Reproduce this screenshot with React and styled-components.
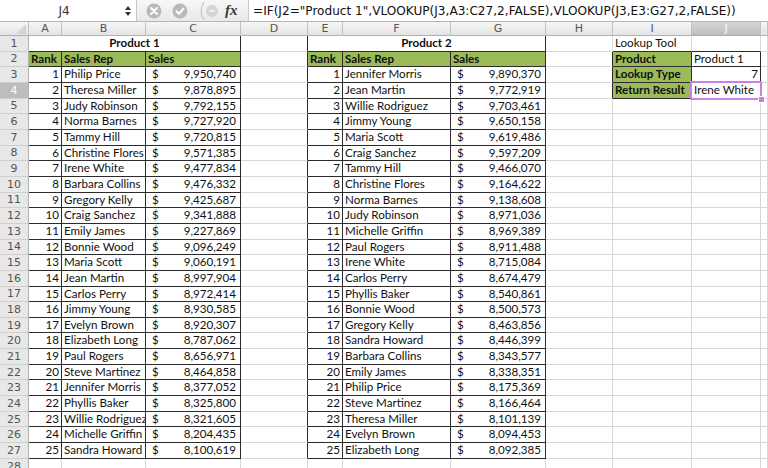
import styled, { createGlobalStyle } from "styled-components";

const GlobalStyle = createGlobalStyle`
    html, body {
        margin: 0;
        padding: 0;
        background: #fff;
        overflow: hidden;
    }
    body {
        width: 768px;
        height: 468px;
    }
`;

const product1 = [
    ["Philip Price", "9,950,740"],
    ["Theresa Miller", "9,878,895"],
    ["Judy Robinson", "9,792,155"],
    ["Norma Barnes", "9,727,920"],
    ["Tammy Hill", "9,720,815"],
    ["Christine Flores", "9,571,385"],
    ["Irene White", "9,477,834"],
    ["Barbara Collins", "9,476,332"],
    ["Gregory Kelly", "9,425,687"],
    ["Craig Sanchez", "9,341,888"],
    ["Emily James", "9,227,869"],
    ["Bonnie Wood", "9,096,249"],
    ["Maria Scott", "9,060,191"],
    ["Jean Martin", "8,997,904"],
    ["Carlos Perry", "8,972,414"],
    ["Jimmy Young", "8,930,585"],
    ["Evelyn Brown", "8,920,307"],
    ["Elizabeth Long", "8,787,062"],
    ["Paul Rogers", "8,656,971"],
    ["Steve Martinez", "8,464,858"],
    ["Jennifer Morris", "8,377,052"],
    ["Phyllis Baker", "8,325,800"],
    ["Willie Rodriguez", "8,321,605"],
    ["Michelle Griffin", "8,204,435"],
    ["Sandra Howard", "8,100,619"],
];

const product2 = [
    ["Jennifer Morris", "9,890,370"],
    ["Jean Martin", "9,772,919"],
    ["Willie Rodriguez", "9,703,461"],
    ["Jimmy Young", "9,650,158"],
    ["Maria Scott", "9,619,486"],
    ["Craig Sanchez", "9,597,209"],
    ["Tammy Hill", "9,466,070"],
    ["Christine Flores", "9,164,622"],
    ["Norma Barnes", "9,138,608"],
    ["Judy Robinson", "8,971,036"],
    ["Michelle Griffin", "8,969,389"],
    ["Paul Rogers", "8,911,488"],
    ["Irene White", "8,715,084"],
    ["Carlos Perry", "8,674,479"],
    ["Phyllis Baker", "8,540,861"],
    ["Bonnie Wood", "8,500,573"],
    ["Gregory Kelly", "8,463,856"],
    ["Sandra Howard", "8,446,399"],
    ["Barbara Collins", "8,343,577"],
    ["Emily James", "8,338,351"],
    ["Philip Price", "8,175,369"],
    ["Steve Martinez", "8,166,464"],
    ["Theresa Miller", "8,101,139"],
    ["Evelyn Brown", "8,094,453"],
    ["Elizabeth Long", "8,092,385"],
];

const columns = ["A", "B", "C", "D", "E", "F", "G", "H", "I", "J", ""];
const DARK = "#2b2b2b";
const GRID = "#d8d8d8";
const GREEN = "#9bbb59";

function Stepper() {
    return (
        <svg width="8" height="12" viewBox="0 0 8 12">
            <path d="M4 1 L7 5 H1 Z" fill="#333" />
            <path d="M4 11 L7 7 H1 Z" fill="#333" />
        </svg>
    );
}

function CancelIcon() {
    return (
        <svg width="16" height="16" viewBox="0 0 16 16">
            <circle cx="8" cy="8" r="7.5" fill="#b9b9b9" />
            <path d="M5 5 L11 11 M11 5 L5 11" stroke="#fff" strokeWidth="2" strokeLinecap="round" />
        </svg>
    );
}

function EnterIcon() {
    return (
        <svg width="16" height="16" viewBox="0 0 16 16">
            <circle cx="8" cy="8" r="7.5" fill="#b9b9b9" />
            <path d="M4.5 8.3 L7 10.8 L11.5 5.5" stroke="#fff" strokeWidth="2" fill="none" strokeLinecap="round" strokeLinejoin="round" />
        </svg>
    );
}

function FunctionIcon() {
    return (
        <svg width="26" height="20" viewBox="0 0 26 20">
            <path d="M6 1 Q0 10 6 19" stroke="#c4c4c4" strokeWidth="1.2" fill="none" />
            <circle cx="14" cy="10" r="6" fill="#d4d4d4" />
            <path d="M11.5 10 H16.5" stroke="#fff" strokeWidth="1.5" />
        </svg>
    );
}

export default function App() {
    const rows = [];

    // row 1
    rows.push(
        <Row key={1} n={1}>
            <Cell $span={3} $center $bold $right $bottom>Product 1</Cell>
            <Cell $right />
            <Cell $span={3} $center $bold $right $bottom>Product 2</Cell>
            <Cell />
            <Cell $bottom>Lookup Tool</Cell>
            <Cell $bottom />
            <Cell />
        </Row>
    );

    // row 2
    rows.push(
        <Row key={2} n={2}>
            <Cell $green $bold $right $bottom>Rank</Cell>
            <Cell $green $bold $right $bottom>Sales Rep</Cell>
            <Cell $green $bold $right $bottom>Sales</Cell>
            <Cell $right />
            <Cell $green $bold $right $bottom>Rank</Cell>
            <Cell $green $bold $right $bottom>Sales Rep</Cell>
            <Cell $green $bold $right $bottom>Sales</Cell>
            <Cell $right />
            <Cell $green $bold $right $bottom>Product</Cell>
            <Cell $right $bottom>Product 1</Cell>
            <Cell />
        </Row>
    );

    for (let i = 0; i < 25; i++) {
        const n = i + 3;
        const [name1, sales1] = product1[i];
        const [name2, sales2] = product2[i];
        let lookup = [<Cell key="i" />, <Cell key="j" />];
        if (n === 3) {
            lookup = [
                <Cell key="i" $green $bold $right $bottom>Lookup Type</Cell>,
                <Cell key="j" $alignRight $right $bottom>7</Cell>,
            ];
        }
        if (n === 4) {
            lookup = [
                <Cell key="i" $green $bold $right $bottom>Return Result</Cell>,
                <Cell key="j" $right $bottom $selected>
                    Irene White
                    <Selection />
                </Cell>,
            ];
        }
        rows.push(
            <Row key={n} n={n} selected={n === 4}>
                <Cell $alignRight $right $bottom>{i + 1}</Cell>
                <Cell $right $bottom>{name1}</Cell>
                <Cell $right $bottom>
                    <Money>
                        <span>$</span>
                        <span>{sales1}</span>
                    </Money>
                </Cell>
                <Cell $right />
                <Cell $alignRight $right $bottom>{i + 1}</Cell>
                <Cell $right $bottom>{name2}</Cell>
                <Cell $right $bottom>
                    <Money>
                        <span>$</span>
                        <span>{sales2}</span>
                    </Money>
                </Cell>
                <Cell $right={n <= 4} />
                {lookup}
                <Cell />
            </Row>
        );
    }

    rows.push(
        <Row key={28} n={28}>
            {columns.map((c, idx) => (
                <Cell key={idx} />
            ))}
        </Row>
    );

    return (
        <>
            <GlobalStyle />
            <Window>
                <FormulaBar>
                    <NameBox>J4</NameBox>
                    <StepperBox>
                        <Stepper />
                    </StepperBox>
                    <Controls>
                        <CancelIcon />
                        <EnterIcon />
                        <FunctionIcon />
                        <Fx>fx</Fx>
                    </Controls>
                    <Formula>
                        =IF(J2="Product 1",VLOOKUP(J3,A3:C27,2,FALSE),VLOOKUP(J3,E3:G27,2,FALSE))
                    </Formula>
                </FormulaBar>
                <Sheet>
                    <Corner>
                        <svg width="10" height="10" viewBox="0 0 10 10">
                            <path d="M10 0 V10 H0 Z" fill="#d4d4d4" />
                        </svg>
                    </Corner>
                    {columns.map((c, idx) => (
                        <ColHead key={idx} $active={c === "J"}>{c}</ColHead>
                    ))}
                    {rows}
                </Sheet>
            </Window>
        </>
    );
}

function Row({ n, selected, children }) {
    return (
        <>
            <RowHead $active={selected}>{n}</RowHead>
            {children}
        </>
    );
}

const Window = styled.div`
    width: 768px;
    height: 468px;
    display: flex;
    flex-direction: column;
    overflow: hidden;
    background: #fff;
`;

const FormulaBar = styled.div`
    height: 21px;
    display: flex;
    align-items: stretch;
    border-bottom: 1px solid #b5b5b5;
    background: linear-gradient(#f7f7f7, #e9e9e9);
    flex-shrink: 0;
`;

const NameBox = styled.div`
    width: 120px;
    background: #fff;
    display: flex;
    align-items: center;
    justify-content: center;
    font-family: "DejaVu Sans", sans-serif;
    font-size: 12px;
    color: #333;
    padding-left: 8px;
    box-sizing: border-box;
`;

const StepperBox = styled.div`
    width: 16px;
    display: flex;
    align-items: center;
    justify-content: center;
    background: #fff;
    border-right: 1px solid #c8c8c8;
`;

const Controls = styled.div`
    width: 112px;
    display: flex;
    align-items: center;
    gap: 10px;
    padding-left: 9px;
    box-sizing: border-box;
    border-right: 1px solid #c8c8c8;
`;

const Fx = styled.span`
    font-family: "Liberation Serif", serif;
    font-style: italic;
    font-weight: bold;
    font-size: 15px;
    color: #3a3a3a;
    margin-left: -9px;
`;

const Formula = styled.div`
    flex: 1;
    background: #fff;
    display: flex;
    align-items: center;
    padding-left: 4px;
    font-family: "DejaVu Sans", sans-serif;
    font-size: 12.1px;
    color: #111;
    white-space: nowrap;
    overflow: hidden;
`;

const Sheet = styled.div`
    display: grid;
    grid-template-columns: 29px 33px 84px 95px 67px 35px 108px 95px 67px 79px 69px 7px;
    grid-template-rows: 14px;
    grid-auto-rows: 15.67px;
    flex: 1;
    overflow: hidden;
    font-family: "Lato", "Liberation Sans", sans-serif;
    font-size: 11.6px;
    color: #111;
`;

const Corner = styled.div`
    background: linear-gradient(#f6f6f6, #e4e4e4);
    border-right: 1px solid #c2c2c2;
    border-bottom: 1px solid #b0b0b0;
    display: flex;
    align-items: flex-end;
    justify-content: flex-end;
    padding: 0 2px 1px 0;
`;

const ColHead = styled.div`
    background: ${(p) =>
        p.$active
            ? "linear-gradient(#d6d6d6, #bdbdbd)"
            : "linear-gradient(#f6f6f6, #e4e4e4)"};
    border-right: 1px solid #c2c2c2;
    border-bottom: 1px solid #b0b0b0;
    color: ${(p) => (p.$active ? "#fff" : "#555")};
    font-family: "DejaVu Sans", sans-serif;
    font-size: 11px;
    display: flex;
    align-items: center;
    justify-content: center;
    line-height: 1;
    overflow: hidden;
`;

const RowHead = styled.div`
    background: ${(p) => (p.$active ? "#bdbdbd" : "#e8e8e8")};
    border-right: 1px solid #b0b0b0;
    border-bottom: 1px solid #cfcfcf;
    color: ${(p) => (p.$active ? "#fff" : "#555")};
    font-family: "DejaVu Sans", sans-serif;
    font-size: 11px;
    display: flex;
    align-items: center;
    justify-content: center;
    overflow: hidden;
`;

const Cell = styled.div`
    position: relative;
    grid-column: span ${(p) => p.$span || 1};
    box-sizing: border-box;
    background: ${(p) => (p.$green ? GREEN : "#fff")};
    border-right: 1px solid ${(p) => (p.$right ? DARK : GRID)};
    border-bottom: 1px solid ${(p) => (p.$bottom ? DARK : GRID)};
    font-weight: ${(p) => (p.$bold ? 700 : 400)};
    text-align: ${(p) => (p.$center ? "center" : p.$alignRight ? "right" : "left")};
    padding: 0 2px;
    line-height: 14.67px;
    white-space: nowrap;
    overflow: ${(p) => (p.$selected ? "visible" : "hidden")};
    z-index: ${(p) => (p.$selected ? 2 : "auto")};
`;

const Money = styled.div`
    display: flex;
    justify-content: space-between;
    padding: 0 2px 0 4px;
`;

const Selection = styled.div`
    position: absolute;
    left: -2px;
    top: -2px;
    right: -2px;
    bottom: -2px;
    border: 2px solid #cf7ee8;
    pointer-events: none;

    &::after {
        content: "";
        position: absolute;
        right: -5px;
        bottom: -5px;
        width: 5px;
        height: 5px;
        background: #cf7ee8;
        border: 1px solid #fff;
    }
`;
